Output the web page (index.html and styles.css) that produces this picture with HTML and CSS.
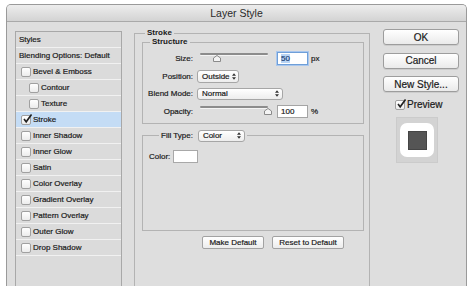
FILE: index.html
```html
<!DOCTYPE html>
<html lang="en">
<head>
    <meta charset="UTF-8">
    <meta name="viewport" content="width=device-width, initial-scale=1.0">
    <title>Layer Style</title>
    <link rel="stylesheet" href="styles.css">
</head>
<body>
    <div class="window">
        <div class="titlebar">Layer Style</div>
        <div class="dialog">
            <div class="styles-list">
                <div class="item">Styles</div>
                <div class="item">Blending Options: Default</div>
                <div class="item box"><span class="check"></span>Bevel &amp; Emboss</div>
                <div class="item box sub"><span class="check"></span>Contour</div>
                <div class="item box sub"><span class="check"></span>Texture</div>
                <div class="item box selected"><span class="check"><svg viewBox="0 0 10 10"><path d="M2 5 L4.2 7.8 L9.5 0.5" fill="none" stroke="#222" stroke-width="1.6"/></svg></span>Stroke</div>
                <div class="item box"><span class="check"></span>Inner Shadow</div>
                <div class="item box"><span class="check"></span>Inner Glow</div>
                <div class="item box"><span class="check"></span>Satin</div>
                <div class="item box"><span class="check"></span>Color Overlay</div>
                <div class="item box"><span class="check"></span>Gradient Overlay</div>
                <div class="item box"><span class="check"></span>Pattern Overlay</div>
                <div class="item box"><span class="check"></span>Outer Glow</div>
                <div class="item box"><span class="check"></span>Drop Shadow</div>
            </div>

            <fieldset class="group">
                <legend class="group-title">Stroke</legend>
                <fieldset class="subgroup structure">
                    <legend class="structure-title">Structure</legend>
                    <div class="form">
                        <label>Size:</label>
                        <div class="ctrl">
                            <div class="slider"><span class="thumb" style="left: 25%"><svg viewBox="0 0 8 7"><path d="M0.5 6.5 V3 L4 0.5 L7.5 3 V6.5 Z" fill="#f4f4f4" stroke="#8a8a8a"/></svg></span></div>
                            <span class="field focus"><span class="picked">50</span></span>
                            <span class="unit">px</span>
                        </div>
                        <label>Position:</label>
                        <div class="ctrl">
                            <span class="select position">Outside<svg viewBox="0 0 5 8"><path d="M2.5 0 L5 3 H0 Z M2.5 8 L5 5 H0 Z" fill="#333"/></svg></span>
                        </div>
                        <label>Blend Mode:</label>
                        <div class="ctrl">
                            <span class="select blend">Normal<svg viewBox="0 0 5 8"><path d="M2.5 0 L5 3 H0 Z M2.5 8 L5 5 H0 Z" fill="#333"/></svg></span>
                        </div>
                        <label>Opacity:</label>
                        <div class="ctrl">
                            <div class="slider"><span class="thumb" style="left: 100%"><svg viewBox="0 0 8 7"><path d="M0.5 6.5 V3 L4 0.5 L7.5 3 V6.5 Z" fill="#f4f4f4" stroke="#8a8a8a"/></svg></span></div>
                            <span class="field">100</span>
                            <span class="unit">%</span>
                        </div>
                    </div>
                </fieldset>

                <fieldset class="subgroup fill">
                    <legend class="fill-title">
                        <label>Fill Type:</label>
                        <span class="select filltype">Color<svg viewBox="0 0 5 8"><path d="M2.5 0 L5 3 H0 Z M2.5 8 L5 5 H0 Z" fill="#333"/></svg></span>
                    </legend>
                    <div class="color-row">
                        <label>Color:</label>
                        <span class="swatch"></span>
                    </div>
                </fieldset>

                <div class="defaults">
                    <button class="small-btn make">Make Default</button>
                    <button class="small-btn reset">Reset to Default</button>
                </div>
            </fieldset>

            <div class="actions">
                <button class="btn">OK</button>
                <button class="btn">Cancel</button>
                <button class="btn">New Style...</button>
                <div class="preview-check">
                    <span class="check"><svg viewBox="0 0 10 10"><path d="M2 5 L4.2 7.8 L9.5 0.5" fill="none" stroke="#222" stroke-width="1.6"/></svg></span>Preview
                </div>
                <div class="preview">
                    <div class="preview-tile"><div class="preview-swatch"></div></div>
                </div>
            </div>
        </div>
    </div>
</body>
</html>
```

FILE: styles.css
```css
/* Fenetre Layer Style */
body {
    margin: 0;
    background-color: #ffffff;
    font-family: "Liberation Sans", Arial, sans-serif;
    font-size: 8px;
    color: #1a1a1a;
    -webkit-text-stroke: 0.2px #1a1a1a;
}

.window {
    margin: 4px 0 0 6px;
    width: 461px;
    height: 282px;
    box-sizing: border-box;
    border: 1px solid #9a9a9a;
    border-bottom: none;
    border-radius: 5px 5px 0 0;
    background-color: #dedede;
    overflow: hidden;
}

.titlebar {
    height: 16px;
    border-bottom: 1px solid #a9a9a9;
    background: linear-gradient(#ededed, #d3d3d3);
    text-align: center;
    font-size: 10.5px;
    line-height: 16px;
    color: #2a2a2a;
    -webkit-text-stroke: 0;
}

.dialog {
    display: flex;
    align-items: stretch;
    height: calc(100% - 17px);
    box-sizing: border-box;
    padding: 7px 7px 0 8px;
}

/* Liste des styles */
.styles-list {
    width: 107px;
    flex-shrink: 0;
    box-sizing: border-box;
    margin-top: 2px;
    border: 1px solid #a8a8a8;
    border-bottom: none;
    background-color: #dbdbdb;
}

.item {
    height: 15px;
    border-bottom: 1px solid #f1f1f1;
    display: flex;
    align-items: center;
    gap: 2px;
    padding-left: 3px;
    white-space: nowrap;
}

.item.box {
    padding-left: 5px;
}

.item.sub {
    padding-left: 13px;
}

.item.selected {
    background-color: #c4dcf5;
}

.check {
    width: 10px;
    height: 10px;
    box-sizing: border-box;
    border: 1px solid #a0a0a0;
    border-radius: 2px;
    background: linear-gradient(#ffffff, #ececec);
    flex-shrink: 0;
    position: relative;
}

.check svg {
    position: absolute;
    left: 0;
    top: -2px;
    width: 10px;
    height: 10px;
}

/* Groupe Stroke */
.group {
    margin: 0 0 0 12px;
    width: 236px;
    flex-shrink: 0;
    box-sizing: border-box;
    border: 1px solid #b3b3b3;
    border-bottom: none;
    padding: 1px 5px 0 7px;
    min-width: 0;
}

.group legend,
.subgroup legend {
    font-weight: bold;
    line-height: 8px;
    padding: 0 2px;
    -webkit-text-stroke: 0;
}

.group-title {
    margin-left: 3px;
}

.subgroup {
    margin: 0;
    border: 1px solid #b3b3b3;
    padding: 6px 0 5px 0;
    min-width: 0;
}

.structure-title {
    margin-left: 7px;
}

.form {
    display: grid;
    grid-template-columns: 50px 1fr;
    grid-auto-rows: 13px;
    column-gap: 4px;
    row-gap: 4.5px;
}

.form label {
    text-align: right;
    line-height: 13px;
}

.ctrl {
    display: flex;
    align-items: center;
}

.slider {
    position: relative;
    width: 68px;
    height: 13px;
    margin-left: 3px;
    margin-right: 9px;
    align-self: flex-start;
}

.slider::before {
    content: "";
    position: absolute;
    left: 0;
    right: 0;
    top: 1px;
    height: 2px;
    border-radius: 1px;
    background-color: #8c8c8c;
    box-shadow: 0 1px 0 #f4f4f4;
}

.thumb {
    position: absolute;
    top: 3px;
    width: 8px;
    height: 7px;
    transform: translateX(-50%);
}

.thumb svg {
    display: block;
    width: 8px;
    height: 7px;
}

.field {
    width: 31px;
    height: 13px;
    box-sizing: border-box;
    border: 1px solid #a4a4a4;
    background-color: #ffffff;
    padding-left: 3px;
    line-height: 11px;
}

.field.focus {
    border-color: #6f9fd8;
    box-shadow: 0 0 0 1px #a9c7ee;
}

.picked {
    background-color: #b8d4f4;
    color: #1d3f75;
    -webkit-text-stroke: 0.2px #1d3f75;
}

.unit {
    margin-left: 3px;
}

.select {
    display: inline-flex;
    align-items: center;
    justify-content: space-between;
    height: 13px;
    box-sizing: border-box;
    border: 1px solid #a6a6a6;
    border-radius: 3px;
    background: linear-gradient(#ffffff, #ededed);
    padding: 0 3px 0 4px;
    font-weight: normal;
    line-height: 11px;
    white-space: nowrap;
}

.select svg {
    width: 4px;
    height: 7px;
    flex-shrink: 0;
    margin-left: 2px;
}

.select.position {
    width: 42px;
}

.select.blend {
    width: 86px;
    height: 12px;
}

.select.filltype {
    width: 47px;
    height: 12px;
}

.fill {
    margin-top: 6px;
    padding: 8px 0 67px 6px;
}

.fill-title {
    margin-left: 10px;
    display: flex;
    align-items: center;
    gap: 5px;
}

.fill-title label,
.fill-title .select {
    font-weight: normal;
    -webkit-text-stroke: 0.2px #1a1a1a;
}

.color-row {
    display: flex;
    align-items: center;
    gap: 3px;
}

.swatch {
    width: 25px;
    height: 13px;
    box-sizing: border-box;
    border: 1px solid #a8a8a8;
    background-color: #ffffff;
}

.defaults {
    display: flex;
    justify-content: flex-end;
    gap: 8px;
    margin-top: 5px;
    padding-right: 20px;
}

.small-btn {
    height: 13px;
    padding: 0;
    font-family: inherit;
    font-size: 8px;
    color: #1a1a1a;
    -webkit-text-stroke: 0.2px #1a1a1a;
    border: 1px solid #a2a2a2;
    border-radius: 2px;
    background: linear-gradient(#ffffff, #ececec);
}

.small-btn.make {
    width: 62px;
}

.small-btn.reset {
    width: 72px;
}

/* Colonne de droite */
.actions {
    margin-left: 13px;
    width: 76px;
    flex-shrink: 0;
    display: flex;
    flex-direction: column;
}

.btn {
    height: 16px;
    margin-bottom: 7.5px;
    padding: 0;
    font-family: inherit;
    font-size: 10px;
    color: #1c1c1c;
    border: 1px solid #9d9d9d;
    border-radius: 3px;
    background: linear-gradient(#ffffff, #eaeaea);
    box-shadow: 0 1px 0 rgba(0, 0, 0, 0.08);
}

.preview-check {
    display: flex;
    align-items: center;
    gap: 2px;
    margin-top: 0.5px;
    margin-left: 12px;
    font-size: 10px;
    line-height: 10px;
}

.preview {
    margin: 7px 0 0 13px;
    width: 42px;
    height: 46px;
    box-sizing: border-box;
    border: 1px solid #cbcbcb;
    background-color: #d3d3d3;
    display: flex;
    align-items: center;
    justify-content: center;
}

.preview-tile {
    width: 34px;
    height: 34px;
    border-radius: 7px;
    background-color: #ffffff;
    display: flex;
    align-items: center;
    justify-content: center;
}

.preview-swatch {
    width: 19px;
    height: 19px;
    box-sizing: border-box;
    border: 1px solid #454545;
    background-color: #555555;
}
```
